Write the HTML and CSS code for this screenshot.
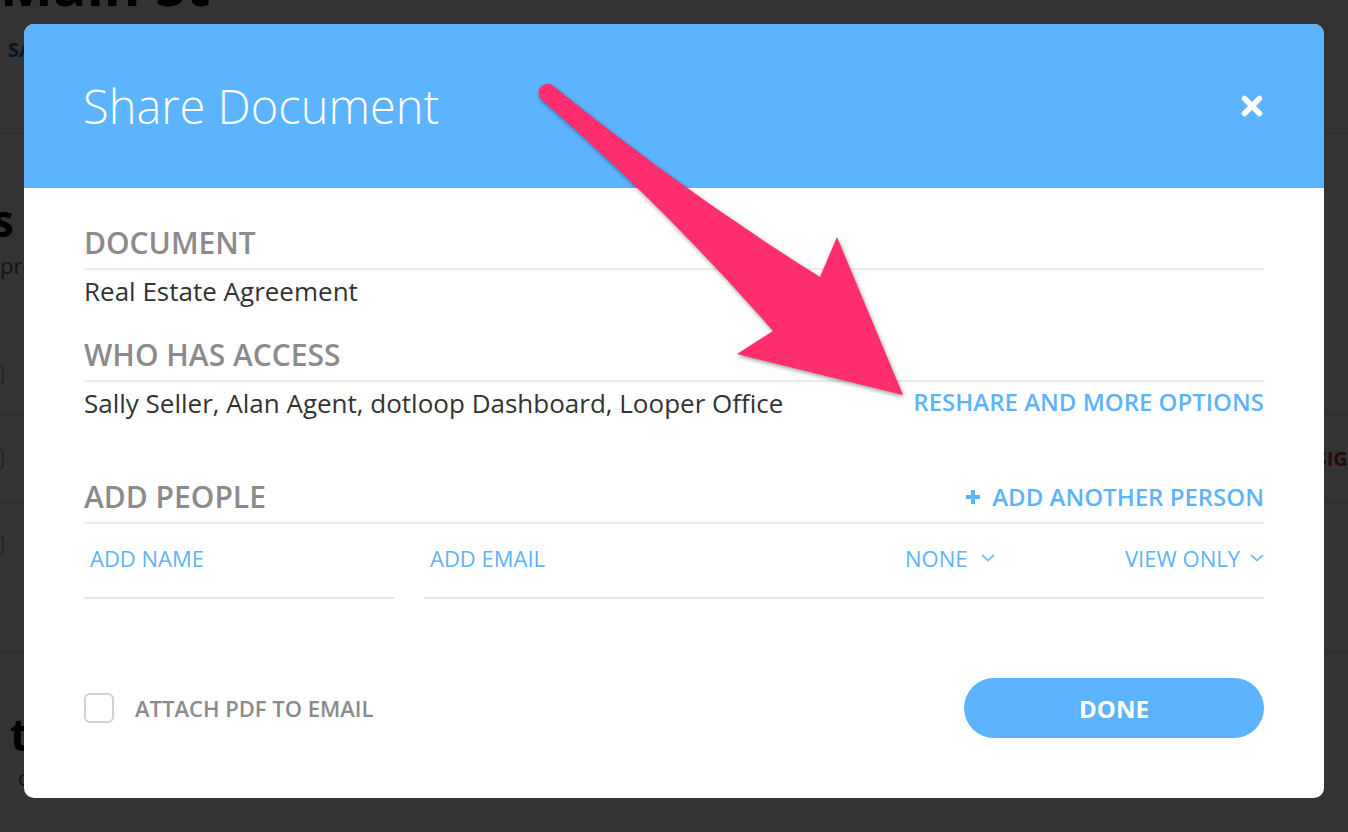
FILE: index.html
```html
<!DOCTYPE html>
<html lang="en">
<head>
  <meta charset="UTF-8" />
  <meta name="viewport" content="width=device-width, initial-scale=1.0" />
  <title>Share Document</title>
  <link rel="stylesheet" href="styles.css">
</head>
<body>
  <!-- page behind the dialog -->
  <div class="page">
    <div class="page-head">
      <div class="page-title">Main St</div>
      <div class="page-tabs">SALE</div>
    </div>
    <div class="page-intro">
      <div class="stub"><span class="intro-title">Documents</span></div>
      <div class="intro-sub">prepare and send for signature</div>
      <div class="stub-box"></div>
    </div>
    <div class="page-row">
      <div class="stub-box"></div>
      <span class="row-status">SIGN</span>
    </div>
    <div class="page-row page-row-tall">
      <div class="stub-box"></div>
    </div>
    <div class="page-foot">
      <div class="foot-title">tasks</div>
      <div class="foot-sub">due this week</div>
    </div>
  </div>

  <div class="backdrop"></div>

  <div class="modal">
    <header class="modal-header">
      <h1>Share Document</h1>
      <button class="close" type="button" aria-label="Close">
        <svg width="24" height="24" viewBox="0 0 24 24"><path d="M4.5 4.5L19.5 19.5M19.5 4.5L4.5 19.5" stroke="#fff" stroke-width="5.5" stroke-linecap="round"/></svg>
      </button>
    </header>

    <div class="modal-body">
      <section class="field">
        <div class="field-label">Document</div>
        <div class="field-value">Real Estate Agreement</div>
      </section>

      <section class="field">
        <div class="field-label">Who has access</div>
        <div class="field-value row">
          <span>Sally Seller, Alan Agent, dotloop Dashboard, Looper Office</span>
          <a class="link link-reshare" href="#">Reshare and more options</a>
        </div>
      </section>

      <section class="field field-add">
        <div class="field-label row row-center">
          <span>Add people</span>
          <a class="link link-add" href="#">
            <svg width="16" height="16" viewBox="0 0 16 16"><path d="M8 1V15M1 8H15" stroke="#5db4fe" stroke-width="4"/></svg>
            Add another person
          </a>
        </div>
        <div class="person-row">
          <div class="input-line input-name">
            <input type="text" placeholder="ADD NAME" />
          </div>
          <div class="input-line input-email">
            <input type="text" placeholder="ADD EMAIL" />
            <span class="select select-role">NONE
              <svg width="14" height="8" viewBox="0 0 14 8"><path d="M1 1L7 6.5L13 1" fill="none" stroke="#7cc2fe" stroke-width="2"/></svg>
            </span>
            <span class="select select-perm">VIEW ONLY
              <svg width="14" height="8" viewBox="0 0 14 8"><path d="M1 1L7 6.5L13 1" fill="none" stroke="#7cc2fe" stroke-width="2"/></svg>
            </span>
          </div>
        </div>
      </section>

      <footer class="modal-footer">
        <label class="attach">
          <span class="checkbox"></span>
          Attach PDF to email
        </label>
        <button class="done" type="button">DONE</button>
      </footer>
    </div>
  </div>

  <!-- annotation arrow -->
  <svg class="arrow" width="1348" height="832" viewBox="0 0 1348 832">
    <path d="M552 85 Q684 192 820 277 L837 237 L903 395 L737 354 L773 331 Q665 207 541 99 A9 9 0 0 1 552 85 Z" fill="#ff2e6f"/>
  </svg>
</body>
</html>
```

FILE: styles.css
```css
:root {
  --blue: #5db4fe;
  --label: #8b8b8b;
  --text: #333;
  --rule: #ececec;
  --underline: #e6e6e6;
}

* {
  box-sizing: border-box;
}

body {
  margin: 0;
  height: 832px;
  overflow: hidden;
  font-family: "Open Sans", sans-serif;
  background: #fff;
  color: #000;
}

/* background page */
.page {
  display: flow-root;
}

.page-head {
  display: flow-root;
  height: 134px;
  border-bottom: 1px solid #d0d0d0;
}

.page-title {
  margin-top: -44px;
  font-size: 56px;
  font-weight: 700;
  line-height: 1;
}

.page-tabs {
  margin-top: 24px;
  padding-left: 8px;
  font-size: 20px;
  font-weight: 700;
  color: #1b6dc1;
}

.page-intro {
  height: 281px;
  padding-top: 56px;
  border-bottom: 1px solid #d0d0d0;
}

.stub {
  width: 14px;
  display: flex;
  justify-content: flex-end;
  white-space: nowrap;
}

.intro-title {
  font-size: 44px;
  font-weight: 700;
}

.intro-sub {
  font-size: 22px;
  line-height: 30px;
  color: #666;
}

.stub-box {
  width: 20px;
  height: 20px;
  margin-left: -16px;
  border: 2px solid #bbb;
  border-radius: 4px;
}

.page-intro .stub-box {
  margin-top: 85px;
}

.page-row {
  height: 88px;
  display: flex;
  align-items: center;
  justify-content: space-between;
  border-bottom: 1px solid #d0d0d0;
}

.page-row-tall {
  height: 149px;
  align-items: flex-start;
  padding-top: 32px;
}

.row-status {
  margin-right: -16px;
  font-size: 20px;
  font-weight: 700;
  color: #c0392b;
}

.page-foot {
  padding: 54px 0 0 10px;
}

.foot-title {
  font-size: 44px;
  font-weight: 700;
  line-height: 56px;
}

.foot-sub {
  padding-left: 8px;
  font-size: 22px;
  color: #666;
}

.backdrop {
  position: fixed;
  inset: 0;
  background: rgba(0, 0, 0, 0.8);
}

/* dialog */
.modal {
  position: fixed;
  top: 24px;
  left: 24px;
  width: 1300px;
  background: #fff;
  border-radius: 10px;
  overflow: hidden;
}

.modal-header {
  height: 164px;
  display: flex;
  align-items: center;
  justify-content: space-between;
  padding: 0 60px 0 59px;
  background: var(--blue);
}

.modal-header h1 {
  margin: 0;
  font-size: 47px;
  font-weight: 300;
  line-height: 1;
  color: #fff;
}

.close {
  display: flex;
  width: 24px;
  height: 24px;
  padding: 0;
  border: 0;
  background: none;
  cursor: pointer;
}

.modal-body {
  padding: 35px 60px 60px;
  color: var(--text);
}

.field {
  margin-bottom: 27px;
}

.field-label {
  padding-bottom: 5px;
  border-bottom: 2px solid var(--rule);
  font-size: 30px;
  line-height: 40px;
  font-weight: 600;
  color: var(--label);
  text-transform: uppercase;
}

.field-value {
  margin-top: 4px;
  font-size: 26px;
  line-height: 34px;
}

.row {
  display: flex;
  justify-content: space-between;
  align-items: baseline;
}

.row-center {
  align-items: center;
}

.link {
  font-size: 24px;
  line-height: 34px;
  font-weight: 600;
  color: var(--blue);
  text-decoration: none;
  text-transform: uppercase;
}

.link-reshare {
  position: relative;
  top: -2px;
}

.link-add {
  display: flex;
  align-items: center;
  gap: 11px;
}

.field-add {
  margin-top: 56px;
  margin-bottom: 0;
}

.person-row {
  display: flex;
  gap: 30px;
}

.input-line {
  height: 75px;
  display: flex;
  align-items: center;
  padding-bottom: 5px;
  border-bottom: 2px solid var(--underline);
}

.input-name {
  width: 310px;
}

.input-email {
  flex: 1;
}

input {
  flex: 1;
  min-width: 0;
  padding: 0 6px;
  border: 0;
  outline: 0;
  background: transparent;
  font-family: inherit;
  font-size: 22px;
  color: var(--blue);
}

input::placeholder {
  color: var(--blue);
  opacity: 1;
}

.select {
  display: flex;
  align-items: center;
  justify-content: space-between;
  font-size: 22px;
  font-weight: 500;
  color: var(--blue);
}

.select-role {
  width: 90px;
}

.select-perm {
  width: 139px;
  margin-left: 130px;
}

.modal-footer {
  margin-top: 79px;
  display: flex;
  justify-content: space-between;
  align-items: center;
}

.attach {
  display: flex;
  align-items: center;
  gap: 21px;
  font-size: 22px;
  font-weight: 600;
  color: var(--label);
  text-transform: uppercase;
}

.checkbox {
  width: 30px;
  height: 30px;
  border: 2px solid #d2d2d2;
  border-radius: 6px;
}

.done {
  width: 300px;
  height: 60px;
  border: 0;
  border-radius: 30px;
  background: var(--blue);
  color: #fff;
  font-family: inherit;
  font-size: 24px;
  font-weight: 700;
  cursor: pointer;
}

.arrow {
  position: absolute;
  top: 0;
  left: 0;
  pointer-events: none;
  filter: drop-shadow(1px 2px 2px rgba(0, 0, 0, 0.4));
}
```
